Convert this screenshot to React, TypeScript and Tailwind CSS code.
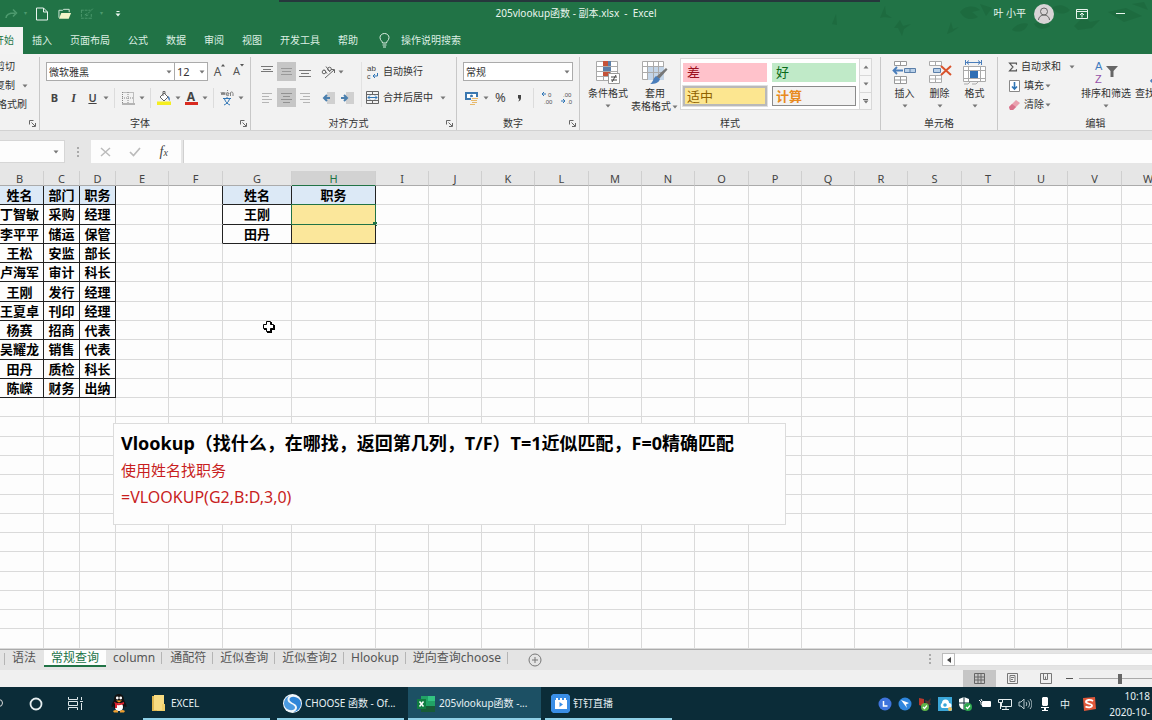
import React from 'react';

const columns = [
  { name: 'B', width: 'w-[44px]' },
  { name: 'C', width: 'w-[36px]' },
  { name: 'D', width: 'w-[36px]' },
  { name: 'E', width: 'w-[53px]' },
  { name: 'F', width: 'w-[54px]' },
  { name: 'G', width: 'w-[69px]' },
  { name: 'H', width: 'w-[84px]' },
  { name: 'I', width: 'w-[53px]' },
  { name: 'J', width: 'w-[53px]' },
  { name: 'K', width: 'w-[53px]' },
  { name: 'L', width: 'w-[54px]' },
  { name: 'M', width: 'w-[53px]' },
  { name: 'N', width: 'w-[53px]' },
  { name: 'O', width: 'w-[54px]' },
  { name: 'P', width: 'w-[53px]' },
  { name: 'Q', width: 'w-[53px]' },
  { name: 'R', width: 'w-[53px]' },
  { name: 'S', width: 'w-[54px]' },
  { name: 'T', width: 'w-[53px]' },
  { name: 'U', width: 'w-[53px]' },
  { name: 'V', width: 'w-[54px]' },
  { name: 'W', width: '' },
];

const staff = [
  ['姓名', '部门', '职务'],
  ['丁智敏', '采购', '经理'],
  ['李平平', '储运', '保管'],
  ['王松', '安监', '部长'],
  ['卢海军', '审计', '科长'],
  ['王刚', '发行', '经理'],
  ['王夏卓', '刊印', '经理'],
  ['杨赛', '招商', '代表'],
  ['吴耀龙', '销售', '代表'],
  ['田丹', '质检', '科长'],
  ['陈嵘', '财务', '出纳'],
];

const lookup = [
  ['姓名', '职务'],
  ['王刚', ''],
  ['田丹', ''],
];

const ROW_COUNT = 24;

const menuTabs = ['插入', '页面布局', '公式', '数据', '审阅', '视图', '开发工具', '帮助'];

const sheetTabs = ['语法', '常规查询', 'column', '通配符', '近似查询', '近似查询2', 'Hlookup', '逆向查询choose'];

function Caret({ className = '' }: { className?: string }) {
  return (
    <svg className={`shrink-0 ${className}`} width="8" height="4" viewBox="0 0 8 4" fill="#777">
      <path d="M1.5 0.5h5L4 3.5z" />
    </svg>
  );
}

function Separator() {
  return <span className="mx-1 h-5 w-px shrink-0 bg-[#dcdcdc]" />;
}

function IconButton({ label, active, children }: { label: string; active?: boolean; children: React.ReactNode }) {
  return (
    <button aria-label={label} className={`flex h-[19px] w-[19px] shrink-0 items-center justify-center ${active ? 'bg-[#c6c6c6]' : ''}`}>
      {children}
    </button>
  );
}

function SplitButton({ label, children }: { label: string; children: React.ReactNode }) {
  return (
    <button aria-label={label} className="flex h-5 w-[27px] shrink-0 items-center justify-between">
      <span className="flex w-[18px] justify-center">{children}</span>
      <Caret />
    </button>
  );
}

function BigButton({ lines, width, children }: { lines: string[]; width: string; children: React.ReactNode }) {
  return (
    <button className={`flex shrink-0 flex-col items-center ${width}`}>
      {children}
      <span className="mt-0.5 whitespace-nowrap leading-[13px]">{lines[0]}</span>
      {lines[1] ? (
        <span className="flex items-center whitespace-nowrap leading-[13px]">
          {lines[1]}
          <Caret />
        </span>
      ) : (
        <Caret className="mt-1" />
      )}
    </button>
  );
}

function Group({ label, width, launcher, children }: { label: string; width: string; launcher?: boolean; children: React.ReactNode }) {
  return (
    <section className={`mt-[3px] flex shrink-0 flex-col border-r border-[#c8c8c8] ${width}`}>
      <div className="min-h-0 flex-1">{children}</div>
      <div className="flex h-[14px] items-center">
        <span className="flex-1 text-center leading-3">{label}</span>
        {launcher && (
          <button aria-label={`${label}设置`} className="w-[10px]">
            <svg width="7" height="7" viewBox="0 0 7 7" fill="none" stroke="#666">
              <path d="M0.5 4.5v-4h4M2.5 2.5l3.5 3.5M6.5 3v3.5h-3.5" />
            </svg>
          </button>
        )}
      </div>
    </section>
  );
}

function DropDown({ label, value, width }: { label: string; value: string; width: string }) {
  return (
    <span className={`relative flex h-[19px] shrink-0 items-center ${width}`}>
      <select aria-label={label} className="h-full w-full appearance-none border border-[#ababab] bg-white pl-0.5 leading-4 text-[#333]">
        <option>{value}</option>
      </select>
      <Caret className="absolute right-0.5" />
    </span>
  );
}

function Lines({ d, color = '#777' }: { d: string; color?: string }) {
  return (
    <svg width="13" height="13" viewBox="0 0 13 13" fill="none" stroke={color}>
      <path d={d} />
    </svg>
  );
}

function TitleBar() {
  return (
    <div className="relative grid h-[27px] grid-cols-[1fr_auto_1fr] items-center text-[10px] text-[#e9f5ee]">
      <span className="absolute left-[279px] top-0 h-0.5 w-[601px] bg-[#26373c]" />
      <div className="flex items-center gap-1 pl-1">
        <button aria-label="恢复" className="flex w-6 items-center gap-1.5 text-[#4d9a6e]">
          <svg className="shrink-0" width="14" height="12" viewBox="0 0 14 12" fill="none" stroke="currentColor" strokeWidth="1.5">
            <path d="M2 10c0-4 3-5 9-5M9 1.5l3.5 3.5L9 8.5" />
          </svg>
          <span className="text-[6px]">▾</span>
        </button>
        <button aria-label="新建" className="ml-1">
          <svg width="12" height="14" viewBox="0 0 12 14" fill="none" stroke="currentColor">
            <path d="M0.5 1h7l4 4v8h-11zM7.5 1v4h4" />
          </svg>
        </button>
        <button aria-label="打开" className="ml-1.5">
          <svg width="14" height="12" viewBox="0 0 15 12">
            <path d="M1 10V2h4l1-1h6v3" fill="none" stroke="#d9eedf" />
            <path d="M3.5 5H14l-2.5 6H1z" fill="#f2f4c8" />
          </svg>
        </button>
        <button aria-label="橡皮擦" className="ml-1 flex items-center gap-1 text-[#4d9a6e]">
          <svg width="16" height="13" viewBox="0 0 17 13" fill="none" stroke="currentColor">
            <path d="M1 3h10M1.5 3v8M1 11.5h12M12 7v5M5 8l4-2 5-5M6 9l3-1" strokeDasharray="3 1" />
          </svg>
          <span className="text-[6px]">▾</span>
        </button>
        <button aria-label="自定义快速访问工具栏" className="ml-2">
          <svg width="6" height="6" viewBox="0 0 6 6" fill="currentColor">
            <path d="M1.5 0h3v1h-3zM0.5 2.5h5L3 5.5z" />
          </svg>
        </button>
      </div>
      <h1 className="whitespace-pre">205vlookup函数 - 副本.xlsx  -  Excel</h1>
      <div className="flex items-center justify-end">
        <span>叶 小平</span>
        <svg className="ml-2" width="20" height="20" viewBox="0 0 20 20">
          <circle cx="10" cy="10" r="10" fill="#d8d4d6" />
          <circle cx="10" cy="7.5" r="3.5" fill="none" stroke="#666" />
          <path d="M4.5 16c0-3 2.5-5 5.5-5s5.500 2 5.500 5" fill="none" stroke="#666" />
        </svg>
        <button aria-label="功能区显示选项" className="ml-[22px]">
          <svg width="12" height="10" viewBox="0 0 12 10" fill="none" stroke="currentColor">
            <path d="M0.500 0.500h11v9h-11zM0.500 2.500h11M6 8.500V4.500M4 6l2-2 2 2" />
          </svg>
        </button>
        <button aria-label="最小化" className="ml-7 mr-[27px]">
          <svg width="9" height="2" viewBox="0 0 9 2" fill="currentColor">
            <path d="M0 0h9v1H0z" />
          </svg>
        </button>
      </div>
    </div>
  );
}

function MenuTabs() {
  return (
    <nav className="relative flex h-[27px] items-center text-[10px] text-[#dcefe3]">
      <button className="flex h-full w-[23px] items-center justify-end overflow-hidden whitespace-nowrap bg-[#f3f3f3] pr-[9px] text-[#217346]">
        开始
      </button>
      {menuTabs.map(tab => (
        <button key={tab} className="h-full px-[9px]">{tab}</button>
      ))}
      <button className="flex h-full items-center pl-3">
        <svg width="11" height="15" viewBox="0 0 11 15" fill="none" stroke="currentColor">
          <path d="M3.5 10c0-2-2.5-2.5-2.5-5.5a4.5 4 0 0 1 9 0c0 3-2.5 3.5-2.5 5.500zM3.5 12h4M4 14h3" />
        </svg>
        <span className="ml-[11px]">操作说明搜索</span>
      </button>
    </nav>
  );
}

function Leaves() {
  return (
    <svg className="absolute right-0 top-0 opacity-60" width="340" height="54" viewBox="0 0 340 54" fill="#1c663c">
      <path d="M20 24l4-10 1 11zM68 18l5-12 1 8 6 4-8-1zM82 28l6-8 3 6 8-2-7 5-2 7-4-8zM135 34l4-12 2 7 6-2-7 5z" />
      <path d="M148 12c4-6 14-8 20-2l-8 2 6 5c-8 4-14 2-18-5zM168 4l12 4-6 8zM200 30c4-6 12-8 16-6-2 6-8 10-16 6zM222 24c6-4 14-2 16 2-6 4-12 4-16-2z" />
      <path d="M240 8c6-4 12-4 18 2-6 6-14 4-18-2zM262 26l10-10 6 6 10-2-8 8-14 2zM296 12l18-4 16 8-18 6zM320 4l12-2 4 8z" />
    </svg>
  );
}

function Ribbon() {
  return (
    <div className="flex h-[77px] overflow-hidden border-b border-[#d2d2d2] bg-[#f2f2f2] text-[10px] text-[#333]">
      <Group label="" width="w-[40px]" launcher>
        <div className="flex flex-col items-end pr-3 leading-[19px]">
          <button className="mr-3 flex w-4 justify-end whitespace-nowrap">剪切</button>
          <button className="flex items-center justify-end gap-1.5 whitespace-nowrap">复制<Caret className="-mr-0.5" /></button>
          <button className="whitespace-nowrap">格式刷</button>
        </div>
      </Group>

      <Group label="字体" width="w-[211px]" launcher>
        <div className="flex items-center pl-1.5 pt-[5px]">
          <DropDown label="字体" value="微软雅黑" width="w-[129px] -mr-px" />
          <DropDown label="字号" value="12" width="w-[34px] text-[11px]" />
          <span className="ml-0.5 flex text-[#555]">
            <IconButton label="增大字号">
              <span className="text-[12px]">A</span>
              <svg className="self-start" width="4" height="6" viewBox="0 0 4 6" fill="#555"><path d="M2 2l2 2.500H0z" /></svg>
            </IconButton>
            <IconButton label="减小字号">
              <span className="text-[11px]">A</span>
              <svg className="self-start" width="4" height="6" viewBox="0 0 4 6" fill="#555"><path d="M2 4.500l2-2.500H0z" /></svg>
            </IconButton>
          </span>
        </div>
        <div className="flex items-center pl-[5px] pt-[7px] text-[#444]">
          <IconButton label="加粗"><b className="text-[11px]">B</b></IconButton>
          <IconButton label="倾斜"><i className="font-['Liberation_Serif',serif] text-[12px] font-bold">I</i></IconButton>
          <IconButton label="下划线"><u className="text-[11px] font-semibold">U</u></IconButton>
          <Caret />
          <Separator />
          <SplitButton label="边框">
            <svg width="13" height="13" viewBox="0 0 13 13" fill="none" stroke="#888">
              <path d="M0.500 0.500h11v11M0.500 0v11M6 0v11M0 6h12" strokeDasharray="1 1" />
              <path d="M0 12h13" stroke="#777" />
            </svg>
          </SplitButton>
          <Separator />
          <SplitButton label="填充颜色">
            <svg width="14" height="14" viewBox="0 0 14 14">
              <path d="M3 6l4-4 4 4-4 4z" fill="#fff" stroke="#666" />
              <path d="M6 5V0.500h2V3" fill="none" stroke="#666" />
              <path d="M11 5c2 1 2 3 1.500 5-1-1-1.500-3-1.500-5z" fill="#2f6fb5" />
              <path d="M0 10.500h14V14H0z" fill="#f5ee20" />
            </svg>
          </SplitButton>
          <SplitButton label="字体颜色">
            <span className="flex flex-col items-center">
              <span className="text-[12px] font-bold leading-[11px]">A</span>
              <span className="h-[3px] w-[13px] bg-[#d92b20]" />
            </span>
          </SplitButton>
          <Separator />
          <SplitButton label="拼音指南">
            <svg width="14" height="16" viewBox="0 0 14 16" fill="none" stroke="#666">
              <path d="M1 2l1 3 1-3 1 3 1-3M6 4h3c0-2-3-2-3 0s2 2 3 1M10.500 6V2.500c1-1 2.500-.5 2.500 1V6M7 1l1-1" strokeWidth="0.800" />
              <path d="M3 8.500h8M7 7v1.500M4.500 9c1 3 3 5 5.500 6M9.500 9c-1 3-3 5-5.500 6" stroke="#2f75b5" />
            </svg>
          </SplitButton>
        </div>
      </Group>

      <Group label="对齐方式" width="w-[206px]" launcher>
        <div className="flex pl-[7px] pt-[5px]">
          <div className="flex flex-col gap-[7px]">
            <div className="flex">
              <IconButton label="顶端对齐"><Lines d="M0 1.5h12M2 4.5h8M0 6.5h12" /></IconButton>
              <IconButton label="垂直居中" active><Lines d="M1 3.5h11M2 6.5h9M1 9.5h11" color="#999" /></IconButton>
              <IconButton label="底端对齐"><Lines d="M0 5.5h12M2 8.5h8M0 11.5h12" /></IconButton>
            </div>
            <div className="flex">
              <IconButton label="左对齐"><Lines d="M1 2.5h10M1 5.5h7M1 8.5h10M1 11.5h7" color="#b5b5b5" /></IconButton>
              <IconButton label="居中" active><Lines d="M1 2.5h11M3 5.5h7M1 8.5h11M3 11.5h7" color="#929292" /></IconButton>
              <IconButton label="右对齐"><Lines d="M1 2.5h10M4 5.5h7M1 8.5h10M4 11.5h7" color="#b5b5b5" /></IconButton>
            </div>
          </div>
          <div className="ml-1 flex flex-col gap-[7px]">
            <button aria-label="方向" className="flex h-[19px] items-center gap-0.5 pl-0.5">
              <svg width="14" height="14" viewBox="0 0 14 14" fill="none" stroke="#666">
                <circle cx="3" cy="7" r="1.800" />
                <path d="M3 4.500l3 4M5 1.500l4 5.500M4 13l9-8M10 4.500h3.500V8" />
                <circle cx="8.500" cy="4" r="1.800" />
              </svg>
              <Caret />
            </button>
            <div className="flex">
              <IconButton label="减少缩进量">
                <svg width="13" height="12" viewBox="0 0 13 12">
                  <path d="M5 0h8v12H5z" fill="#d0d0d0" />
                  <path d="M8 6H2M5 3L2 6l3 3" fill="none" stroke="#4a7fae" strokeWidth="2" />
                </svg>
              </IconButton>
              <IconButton label="增加缩进量">
                <svg width="13" height="12" viewBox="0 0 13 12">
                  <path d="M5 0h8v12H5z" fill="#d0d0d0" />
                  <path d="M0 6h6M3 3l3 3-3 3" fill="none" stroke="#4a7fae" strokeWidth="2" />
                </svg>
              </IconButton>
            </div>
          </div>
          <div className="ml-1 flex flex-col gap-[7px] border-l border-[#e2e2e2] pl-1">
            <button className="flex h-[19px] items-center gap-1 whitespace-nowrap">
              <svg width="13" height="14" viewBox="0 0 13 14">
                <text x="1" y="6" fontSize="8" fill="#444" fontFamily="Liberation Sans">ab</text>
                <text x="1" y="14" fontSize="7" fill="#444" fontFamily="Liberation Sans">c</text>
                <path d="M11.500 8v3H7M9 9l-2 2 2 2" fill="none" stroke="#2f75b5" />
              </svg>
              自动换行
            </button>
            <button className="flex h-[19px] items-center gap-1 whitespace-nowrap">
              <svg width="13" height="13" viewBox="0 0 13 13" fill="none" stroke="#666">
                <path d="M0.500 0.500h12v12h-12zM0.500 3.500h12M0.500 9.500h12M6.500 0.500v3M6.500 9.500v3" />
                <path d="M2 6.500h9M4 4.500l-2 2 2 2M9 4.500l2 2-2 2" stroke="#2f75b5" />
              </svg>
              合并后居中
              <Caret className="ml-0.5" />
            </button>
          </div>
        </div>
      </Group>

      <Group label="数字" width="w-[123px]" launcher>
        <div className="flex pl-1.5 pt-[5px]">
          <DropDown label="数字格式" value="常规" width="w-[110px]" />
        </div>
        <div className="flex items-center pl-1.5 pt-[7px] text-[#444]">
          <SplitButton label="会计数字格式">
            <svg width="14" height="13" viewBox="0 0 14 13">
              <path d="M0 0h13v8H0z" fill="#3b78b0" />
              <path d="M2 2h9v4H2z" fill="#fff" />
              <circle cx="6.500" cy="4" r="1.500" fill="#3b78b0" />
              <path d="M6 5h7v7H6z" fill="#f2f2f2" />
              <path d="M7 6.500h6M6 8.500h6M7 10.500h5M5 12.500h5" stroke="#e8b96a" />
            </svg>
          </SplitButton>
          <span className="ml-px flex">
            <IconButton label="百分比"><span className="text-[13px]">%</span></IconButton>
            <IconButton label="千位分隔">
              <svg width="5" height="8" viewBox="0 0 5 8" fill="#444">
                <path d="M1 1h3v3c0 2-1 3-3 3.500 1-1 1.500-2 1-3H1z" />
              </svg>
            </IconButton>
          </span>
          <Separator />
          <IconButton label="增加小数位数">
            <svg width="13" height="14" viewBox="0 0 13 14">
              <path d="M5 3H1M3 1L1 3l2 2" fill="none" stroke="#2f75b5" />
              <text x="7" y="6" fontSize="6" fill="#555" fontFamily="Liberation Sans">0</text>
              <text x="3" y="13" fontSize="6" fill="#555" fontFamily="Liberation Sans">.00</text>
            </svg>
          </IconButton>
          <IconButton label="减少小数位数">
            <svg width="13" height="14" viewBox="0 0 13 14">
              <text x="3" y="6" fontSize="6" fill="#555" fontFamily="Liberation Sans">.00</text>
              <path d="M1 10h4M3 8l2 2-2 2" fill="none" stroke="#2f75b5" />
              <text x="7" y="13" fontSize="6" fill="#555" fontFamily="Liberation Sans">.0</text>
            </svg>
          </IconButton>
        </div>
      </Group>

      <Group label="样式" width="w-[301px]">
        <div className="flex pl-[5px]">
          <div className="flex pt-1">
            <BigButton lines={['条件格式']} width="w-[46px]">
              <svg width="25" height="24" viewBox="0 0 25 24">
                <path d="M0.500 0.500h21v19h-21z" fill="#fff" stroke="#aaa" />
                <path d="M0 5.500h22M0 10.500h22M0 15.500h22M7.500 0v20M14.500 0v20" stroke="#aaa" fill="none" />
                <path d="M7 0h5v5H7zM7 11h7v4H7z" fill="#c5533a" />
                <path d="M12 0h3v5h-3zM7 6h8v4H7z" fill="#5b7fa9" />
                <path d="M12.500 12.500h11v10h-11z" fill="#fff" stroke="#999" />
                <path d="M15 16h6M15 19h6M20 14l-4 7" stroke="#444" />
              </svg>
            </BigButton>
            <BigButton lines={['套用', '表格格式']} width="w-[48px]">
              <svg width="26" height="24" viewBox="0 0 26 24">
                <path d="M0.500 0.500h21v18h-21z" fill="#fff" stroke="#aaa" />
                <path d="M6 6h16v13H6z" fill="#c3d5e8" />
                <path d="M0 5.500h22M0 11.500h22M5.500 0v19M11.500 0v19M16.500 0v19" stroke="#aaa" fill="none" />
                <path d="M24 7l1.500 1.500L17 18l-3-2z" fill="#777" />
                <path d="M14 15l4 3c-1 4-5 5-10 5 3-1 3-6 6-8z" fill="#4a7ebb" />
              </svg>
            </BigButton>
          </div>
          <div className="ml-px mt-px flex h-[52px] border border-[#d8d8d8] bg-white text-[13px]">
            <div className="grid grid-cols-[84px_84px] grid-rows-[19px_20px] gap-x-[5px] gap-y-1 py-1 pl-0.5 leading-none">
              <button className="bg-[#ffc2cb] pl-1 text-left text-[#9c1020]">差</button>
              <button className="bg-[#c0eac8] pl-1 text-left text-[#0a6a1a]">好</button>
              <button className="border-2 border-[#b9b9b9] bg-[#fce690] pl-0.5 text-left text-[#8f6200] outline outline-1 outline-[#e0e0e0]">适中</button>
              <button className="border border-[#8b8b8b] bg-[#f2f2f2] pl-[3px] text-left font-bold text-[#e88a20]">计算</button>
            </div>
            <div className="ml-[3px] flex w-[12px] flex-col divide-y divide-[#d8d8d8] border-l border-[#d8d8d8] bg-[#f6f6f6]">
              <button aria-label="上一行" className="flex flex-1 items-center justify-center"><Caret className="rotate-180" /></button>
              <button aria-label="下一行" className="flex flex-1 items-center justify-center"><Caret /></button>
              <button aria-label="其他" className="flex flex-1 flex-col items-center justify-center">
                <span className="h-px w-[5px] bg-[#666]" />
                <Caret />
              </button>
            </div>
          </div>
        </div>
      </Group>

      <Group label="单元格" width="w-[117px]">
        <div className="flex pl-1.5 pt-[3px]">
          <BigButton lines={['插入']} width="w-[35px]">
            <svg width="25" height="25" viewBox="0 0 25 25" fill="#fff" stroke="#999">
              <path d="M2.500 1.500h12v4h-12zM8.500 1.500v4M2.500 16.500h12v7h-12zM8.500 16.500v7M2.500 20h12" />
              <path d="M12.500 8.500h11v4h-11zM18 8.500v4" fill="#b9d0e8" stroke="#5b7fa9" />
              <path d="M11 10.500H1.500M5 7l-3.500 3.500L5 14" fill="none" stroke="#4a7ebb" strokeWidth="1.800" />
            </svg>
          </BigButton>
          <BigButton lines={['删除']} width="w-[35px]">
            <svg width="25" height="25" viewBox="0 0 25 25" fill="#fff" stroke="#aaa">
              <path d="M2.500 1.500h12v4h-12zM8.500 1.500v4M2.500 15.500h12v7h-12zM8.500 15.500v7M2.500 19h12" />
              <path d="M6.500 8.500h7v4h-7z" fill="#b9d0e8" stroke="#5b7fa9" />
              <path d="M14 6l10 9M24 6l-10 9" stroke="#d9532c" strokeWidth="2" />
            </svg>
          </BigButton>
          <BigButton lines={['格式']} width="w-[35px]">
            <svg width="25" height="25" viewBox="0 0 25 25" fill="none" stroke="#aaa">
              <path d="M3.500 0v5M19.500 0v5M4 2.500h15M7 0.500L4.500 2.500 7 4.500M16 0.500l2.500 2L16 4.500" stroke="#4a7ebb" />
              <path d="M1.500 6.500h22v15h-22z" fill="#fff" />
              <path d="M1 10.500h23M1 18.500h23M6.500 7v15M18.500 7v15M2 24h4l2-2M10 24h4l2-2" />
              <path d="M8 11h8v7H8z" fill="#2f6fb5" stroke="none" />
            </svg>
          </BigButton>
        </div>
      </Group>

      <Group label="编辑" width="w-[196px]">
        <div className="flex pl-2.5">
          <div className="flex w-[68px] flex-col leading-[19px]">
            <button className="flex items-center whitespace-nowrap">
              <svg width="13" height="12" viewBox="0 0 13 12" fill="none" stroke="#555" strokeWidth="1.500">
                <path d="M11 3V1H2l4.500 5L2 11h9V9" />
              </svg>
              <span className="ml-[3px]">自动求和</span>
              <Caret className="ml-[7px]" />
            </button>
            <button className="flex items-center">
              <svg width="13" height="12" viewBox="0 0 13 12" fill="none">
                <path d="M1.500 0.500h10v11h-10z" fill="#fff" stroke="#888" />
                <path d="M6.500 2v7M4 6.500L6.500 9 9 6.500" stroke="#2f75b5" strokeWidth="1.600" />
              </svg>
              <span className="ml-[3px]">填充</span>
              <Caret />
            </button>
            <button className="flex items-center">
              <svg width="13" height="12" viewBox="0 0 13 12">
                <path d="M1 8l7-7 4 3-7 7H2z" fill="#e9a0ae" />
                <path d="M1 8l3-3 4 3-3 3H2z" fill="#d9718a" />
              </svg>
              <span className="ml-[3px]">清除</span>
              <Caret />
            </button>
          </div>
          <div className="flex pt-[3px]">
            <BigButton lines={['排序和筛选']} width="w-[60px]">
              <svg width="25" height="25" viewBox="0 0 25 25">
                <text x="1" y="10" fontSize="11" fill="#3f7cbf" fontFamily="Liberation Sans">A</text>
                <text x="1" y="23" fontSize="11" fill="#9550a8" fontFamily="Liberation Sans">Z</text>
                <path d="M12 6h12l-4.500 5v6h-3v-6z" fill="#666" />
              </svg>
            </BigButton>
            <BigButton lines={['查找和选择']} width="w-[48px]">
              <svg width="25" height="25" viewBox="0 0 25 25" fill="none" stroke="#4a7ebb" strokeWidth="3">
                <circle cx="15" cy="9" r="6" />
                <path d="M10 14l-7 8" />
              </svg>
            </BigButton>
          </div>
        </div>
      </Group>
    </div>
  );
}

function FormulaBar() {
  return (
    <div className="flex h-[40px] items-center bg-[#e6e6e6] pt-px">
      <div className="relative flex h-[23px] w-[65px] items-center border border-l-0 border-[#d6d6d6] bg-[#fdfdfd]">
        <input aria-label="名称框" className="h-full w-full bg-transparent text-[11px] outline-none" />
        <Caret className="absolute right-1" />
      </div>
      <svg className="mx-[11px]" width="4" height="12" viewBox="0 0 4 12" fill="#aaa">
        <path d="M1 1h2v2H1zM1 5h2v2H1zM1 9h2v2H1z" />
      </svg>
      <div className="flex h-[23px] w-[90px] items-center justify-around bg-[#fdfdfd] pr-1">
        <button aria-label="取消">
          <svg width="11" height="10" viewBox="0 0 11 10" fill="none" stroke="#bbb" strokeWidth="1.500">
            <path d="M1 1l9 8M10 1L1 9" />
          </svg>
        </button>
        <button aria-label="输入">
          <svg width="12" height="10" viewBox="0 0 12 10" fill="none" stroke="#bbb" strokeWidth="1.700">
            <path d="M1 5l3.500 3.500L11 1" />
          </svg>
        </button>
        <button aria-label="插入函数" className="font-['Liberation_Serif',serif] text-[14px] italic leading-none text-[#444]">
          f<span className="text-[10px]">x</span>
        </button>
      </div>
      <input aria-label="编辑栏" className="ml-[2px] h-[23px] flex-1 border-l border-[#d0d0d0] bg-[#fdfdfd] text-[11px] outline-none" />
    </div>
  );
}

function cellContent(row: number, col: number) {
  if (col < 3) return staff[row]?.[col] ?? '';
  if (col === 5 || col === 6) return lookup[row]?.[col - 5] ?? '';
  return '';
}

function cellClass(row: number, col: number) {
  const inStaff = col < 3 && row < staff.length;
  const inLookup = (col === 5 || col === 6) && row < lookup.length;
  const classes = ['relative h-[19px] border-b border-r p-0 text-center align-middle'];

  classes.push(inStaff || inLookup ? 'border-b-[#222]' : 'border-b-[#dadada]');
  classes.push(inStaff || inLookup || (col === 4 && row < lookup.length) ? 'border-r-[#222]' : 'border-r-[#dadada]');
  if (col === 0) classes.push('pr-1');
  if ((inStaff || inLookup) && row === 0) classes.push('bg-[#dce9f6]');
  if (inLookup && col === 6 && row > 0) classes.push('bg-[#fbe79b]');
  return classes.join(' ');
}

function Sheet() {
  return (
    <main className="relative min-h-0 flex-1 overflow-hidden bg-[#fdfdfd]">
      <table className="h-full w-full min-w-[1175px] table-fixed border-separate border-spacing-0">
        <colgroup>
          {columns.map(column => (
            <col key={column.name} className={column.width} />
          ))}
        </colgroup>
        <thead>
          <tr className="h-[15px]">
            {columns.map(column => (
              <th
                key={column.name}
                className={`h-[15px] border-b border-r border-r-[#cfcfcf] p-0 pt-px text-[11px] font-normal leading-[13px] ${
                  column.name === 'B' ? 'pr-1 ' : ''
                }${
                  column.name === 'H' ? 'border-b-[#217346] bg-[#d2d2d2] text-[#217346]' : 'border-b-[#ababab] bg-[#e6e6e6] text-[#444]'
                }`}
              >
                {column.name}
              </th>
            ))}
          </tr>
        </thead>
        <tbody className="whitespace-nowrap text-[13px] font-bold leading-[18px] text-black">
          {Array.from({ length: ROW_COUNT }, (_, row) => (
            <tr key={row} className="h-[19px]">
              {columns.map((column, col) => (
                <td key={column.name} className={cellClass(row, col)}>
                  {cellContent(row, col)}
                  {column.name === 'H' && row === 1 && (
                    <span className="absolute -inset-px border border-[#217346]">
                      <span className="absolute -bottom-0.5 -right-0.5 h-1 w-1 bg-[#217346]" />
                    </span>
                  )}
                </td>
              ))}
            </tr>
          ))}
        </tbody>
      </table>

      <div className="absolute left-[113px] top-[252px] h-[102px] w-[673px] border border-[#dcdcdc] bg-[#fdfdfd] px-[7px] pt-1.5">
        <p className="whitespace-nowrap text-[18px] font-bold leading-[27px] text-black">
          Vlookup（找什么，在哪找，返回第几列，T/F）T=1近似匹配，F=0精确匹配
        </p>
        <p className="text-[15px] leading-[27px] text-[#c81e1e]">使用姓名找职务</p>
        <p className="text-[16px] leading-[27px] text-[#c81e1e]">=VLOOKUP(G2,B:D,3,0)</p>
      </div>

      <svg className="absolute left-[262px] top-[149px]" width="14" height="14" viewBox="0 0 14 14">
        <path d="M5 2h5v3h3v5h-3v3H5v-3H2V5h3z" fill="#000" />
        <path d="M4.500 1.500h4v3h3v4h-3v3h-4v-3h-3v-4h3z" fill="#fff" stroke="#000" />
      </svg>
    </main>
  );
}

function SheetTabs() {
  return (
    <div className="flex h-[21px] items-start border-t border-[#ababab] bg-[#e4e4e4] text-[12px] text-[#555]">
      <span className="ml-1 mt-[3px] h-3 w-px bg-[#b5b5b5]" />
      {sheetTabs.map(tab =>
        tab === '常规查询' ? (
          <button key={tab} className="h-[17px] border-b-2 border-[#217346] bg-[#fdfdfd] px-[7px] leading-[15px] text-[#217346]">
            {tab}
          </button>
        ) : (
          <button key={tab} className="flex h-[17px] items-center pb-0.5 pl-[7px] leading-[15px]">
            {tab}
            <span className={`ml-1.5 h-3 w-px ${tab === '语法' || tab === 'column' ? 'mr-px' : ''} ${tab === '语法' ? '' : 'bg-[#b5b5b5]'}`} />
          </button>
        )
      )}
      <button aria-label="新工作表" className="ml-5 mt-[3px]">
        <svg width="14" height="14" viewBox="0 0 14 14" fill="none" stroke="#777">
          <circle cx="7" cy="7" r="6" />
          <path d="M7 4v6M4 7h6" />
        </svg>
      </button>
      <svg className="ml-auto mt-[3px]" width="4" height="12" viewBox="0 0 4 12" fill="#aaa">
        <path d="M1 1h2v2H1zM1 5h2v2H1zM1 9h2v2H1z" />
      </svg>
      <div className="ml-2.5 mt-[3px] flex h-[13px] w-[210px]">
        <button aria-label="向左滚动" className="flex w-[13px] items-center justify-center border border-[#bbb] bg-[#fdfdfd]">
          <svg width="4" height="6" viewBox="0 0 4 6" fill="#444">
            <path d="M4 0v6L0 3z" />
          </svg>
        </button>
        <span className="flex-1 border-y border-[#e0e0e0] bg-[#fdfdfd]" />
      </div>
    </div>
  );
}

function StatusBar() {
  return (
    <div className="flex h-[17px] items-center justify-end bg-[#f0f0f0]">
      <button aria-label="普通" className="flex h-full w-[33px] items-center justify-center bg-[#c6c6c6]">
        <svg width="11" height="11" viewBox="0 0 11 11" fill="none" stroke="#666">
          <path d="M0.500 0.500h10v10h-10zM0.500 4h10M0.500 7h10M4 0.500v10M7 0.500v10" />
        </svg>
      </button>
      <button aria-label="页面布局" className="flex w-[33px] justify-center">
        <svg width="11" height="11" viewBox="0 0 11 11" fill="none" stroke="#777">
          <path d="M0.500 0.500h10v10h-10zM3 2.500h5v6H3zM4 4.500h3M4 6.500h2" />
        </svg>
      </button>
      <button aria-label="分页预览" className="flex w-[33px] justify-center">
        <svg width="12" height="11" viewBox="0 0 12 11" fill="none" stroke="#777">
          <path d="M0.500 0.500h11v10h-11zM3.500 0.500v6h4v-6M5.500 6.500v-3" />
        </svg>
      </button>
      <button aria-label="缩小" className="ml-1 h-px w-[7px] bg-[#555]" />
      <div className="relative ml-1.5 flex h-full w-[73px] items-center">
        <span className="h-px w-full bg-[#aaa]" />
        <span className="absolute left-[39px] h-2.5 w-1 bg-[#666]" />
      </div>
    </div>
  );
}

function Task({ title, active, children }: { title: string; active?: boolean; children: React.ReactNode }) {
  return (
    <button
      className={`flex h-full shrink-0 items-center gap-[3px] whitespace-nowrap border-b-2 border-[#8fd0e6] pt-0.5 ${
        active ? 'w-[133px] bg-[#1c5064] pl-2' : 'w-[127px] pl-1.5'
      }`}
    >
      {children}
      {title}
    </button>
  );
}

function Taskbar() {
  return (
    <footer className="flex h-[33px] items-center bg-[#0b2c38] text-[10px] text-[#e8f1f4]">
      <div className="flex w-[143px] shrink-0 items-center">
        <button aria-label="搜索">
          <svg width="4" height="12" viewBox="0 0 4 12" fill="none" stroke="#ddd">
            <path d="M-1 1.500a3.500 3.500 0 0 1 0 7" />
          </svg>
        </button>
        <button aria-label="Cortana" className="ml-[25px]">
          <svg width="14" height="14" viewBox="0 0 14 14" fill="none" stroke="#e6eef0" strokeWidth="1.800">
            <circle cx="7" cy="7" r="5.500" />
          </svg>
        </button>
        <button aria-label="任务视图" className="ml-[25px]">
          <svg width="15" height="13" viewBox="0 0 15 13" fill="none" stroke="#dde6e8">
            <path d="M0.500 0v2.500h9V0M0.500 4.500h9v4h-9zM0.500 13v-2.500h9V13M13.500 0v3M13.500 6v7M12 4.500h3" />
          </svg>
        </button>
        <button aria-label="QQ" className="ml-7">
          <svg width="16" height="19" viewBox="0 0 16 19">
            <path d="M8 0c3 0 5 2 5 6 1 2 3 5 2.500 7-1 .5-1.500-1-2-1l-1 3h-9l-1-3c-.5 0-1 1.500-2 1C0 11 2 8 3 6c0-4 2-6 5-6z" fill="#111" />
            <path d="M8 9c3 0 4 2 4 4s-1 4-4 4-4-2-4-4 1-4 4-4z" fill="#fff" />
            <circle cx="6.300" cy="4" r="1.400" fill="#fff" />
            <circle cx="9.700" cy="4" r="1.400" fill="#fff" />
            <path d="M5 6.500h6L8 8.500z" fill="#f5a623" />
            <path d="M3 8c3 1.500 7 1.500 10 0v2c-2 1-5 1.500-7 1v3H4v-4z" fill="#d9232e" />
            <path d="M2 17c2-1.500 4-1 5 0v1.500H3zM9 17c1-1 3-1.500 5 0l-1 1.500H9z" fill="#f0a030" />
          </svg>
        </button>
      </div>
      <div className="flex h-full gap-1">
        <div className="h-full pr-[3px]">
          <Task title="EXCEL">
            <svg className="mx-[3px]" width="13" height="17" viewBox="0 0 13 17">
              <path d="M0 1h5v15H0z" fill="#e0b850" />
              <path d="M2 0h10v15H2z" fill="#f8dc82" />
              <path d="M10 9h3v7h-8v-1h5z" fill="#f0cf6a" />
            </svg>
          </Task>
        </div>
        <Task title="CHOOSE 函数 - Of...">
          <svg width="19" height="19" viewBox="0 0 19 19">
            <circle cx="9.500" cy="9.500" r="9.500" fill="#f2f7fb" />
            <path d="M13.500 3.500C10 2 6.500 3 6.500 5.500c0 3.500 7.500 3.500 7.500 8 0 2-1.500 3.500-3.500 4.500 5-.5 7.500-4.500 7.500-8.500 0-2.500-1.500-5-4.500-6z" fill="#2f86d8" />
            <path d="M5 15.500c3.500 1.500 7 .5 7-2 0-3.500-7.500-3.500-7.500-8C4.500 4 5 3 6.500 1.800 3 3 1 6 1 9.500c0 2.500 1.500 5 4 6z" fill="#4a9ae0" />
          </svg>
        </Task>
        <Task title="205vlookup函数 -..." active>
          <svg width="20" height="18" viewBox="0 0 20 18">
            <path d="M5 1h14v16H5z" fill="#21a366" />
            <path d="M12 1h7v5h-7z" fill="#33c481" />
            <path d="M5 11h14v6H5z" fill="#185c37" />
            <path d="M1 4h9v10H1z" fill="#107c41" />
            <path d="M3.500 6.500l4 5M7.500 6.500l-4 5" stroke="#fff" strokeWidth="1.500" />
          </svg>
        </Task>
        <Task title="钉钉直播">
          <svg width="19" height="19" viewBox="0 0 19 19">
            <path d="M2 0h15l2 2v15l-2 2H2l-2-2V2z" fill="#3a8ee6" />
            <path d="M4 6h12v9H4zM5 4h2v2H5zM9 4h2v2H9zM13 4h2v2h-2z" fill="#fff" />
            <path d="M8.500 8v5l3.500-2.500z" fill="#3a8ee6" />
          </svg>
        </Task>
      </div>

      <div className="ml-auto flex shrink-0 items-center gap-1.5">
        <svg width="14" height="14" viewBox="0 0 14 14">
          <circle cx="7" cy="7" r="6.500" fill="#3f74dc" />
          <path d="M5.500 4v5H9.500" fill="none" stroke="#fff" strokeWidth="1.500" />
        </svg>
        <svg width="14" height="14" viewBox="0 0 14 14">
          <circle cx="7" cy="7" r="6.500" fill="#2f86dd" />
          <path d="M3 3l8 3-3 1.500 1 3.500z" fill="#fff" />
        </svg>
        <svg width="14" height="14" viewBox="0 0 14 14">
          <path d="M1 1l5 1v8l-5-2z" fill="#b8382c" />
          <path d="M7 3l3 1 3-3-1 4 1 3H8z" fill="#54332f" />
          <circle cx="7" cy="10" r="4" fill="#5fb548" />
          <path d="M5 10l1.500 1.500L9 8.500" fill="none" stroke="#fff" strokeWidth="1.200" />
        </svg>
        <svg width="14" height="14" viewBox="0 0 14 14">
          <path d="M0 0h14v14H0z" fill="#3aa6d8" />
          <path d="M4 11a3 3 0 0 1 0-5 3.500 3.500 0 0 1 7 0 2.500 2.500 0 0 1 0 5z" fill="#fff" />
          <circle cx="7" cy="8" r="1.800" fill="#3aa6d8" />
          <circle cx="12" cy="12" r="2" fill="#f0c060" />
        </svg>
        <svg width="14" height="14" viewBox="0 0 14 14">
          <path d="M6 0l5 2v4c0 4-2 6-5 7-3-1-5-3-5-7V2z" fill="#fff" />
          <path d="M6 0v13M1 6h10" stroke="#0b2c38" />
          <circle cx="10" cy="10" r="4" fill="#2fa84f" />
          <path d="M8 10l1.500 1.500L12 8.500" fill="none" stroke="#fff" strokeWidth="1.200" />
        </svg>
        <svg width="14" height="14" viewBox="0 0 14 14" fill="none" stroke="#fff">
          <path d="M4.500 4.500h8v5h-8zM1 3l2 2M3 2l1 2M3 5c0 3 0 3 2 3" />
          <path d="M5 5h7v4H5z" fill="#fff" />
        </svg>
        <svg width="14" height="14" viewBox="0 0 14 14" fill="none" stroke="#e6eef0">
          <path d="M4 2.500h9.500v7H3.500V6M8 10v3M4 12.500h7M0.500 2.500h4v3h-4zM2.500 6v6" />
        </svg>
        <svg width="14" height="14" viewBox="0 0 14 14" fill="none" stroke="#b5c4c8">
          <path d="M1 5h2l3-3v10L3 9H1zM8 5c1 1 1 3 0 4M10 3.500c2 2 2 5 0 7M12 2c2.500 3 2.500 7 0 10" />
        </svg>
        <svg width="14" height="14" viewBox="0 0 14 14" fill="#fff">
          <path d="M5 0h4l1 1v7l-1 1H5L4 8V1zM3 10h8v1H8v2h2v1H4v-1h2v-2H3z" />
        </svg>
        <span className="w-[14px] text-center leading-none">中</span>
        <svg className="ml-1" width="14" height="14" viewBox="0 0 14 14">
          <path d="M1 1l12-1 1 12-12 2z" fill="#e0583a" />
          <path d="M11 4C8 2 4 3 4 5s6 1.500 6 3.500S6 11 3.500 9.500" fill="none" stroke="#fff" strokeWidth="1.800" />
        </svg>
        <time className="ml-1.5 w-[44px] whitespace-nowrap pr-0.5 text-right leading-4">
          <span className="block">10:18</span>
          <span className="block">2020-10-</span>
        </time>
      </div>
    </footer>
  );
}

export default function App(): React.ReactNode {
  return (
    <div className="flex h-screen flex-col overflow-hidden bg-[#e6e6e6] font-['Noto_Sans','Noto_Sans_CJK_SC',sans-serif]">
      <header className="relative bg-[#217346]">
        <Leaves />
        <TitleBar />
        <MenuTabs />
      </header>
      <Ribbon />
      <FormulaBar />
      <Sheet />
      <SheetTabs />
      <StatusBar />
      <Taskbar />
    </div>
  );
}
